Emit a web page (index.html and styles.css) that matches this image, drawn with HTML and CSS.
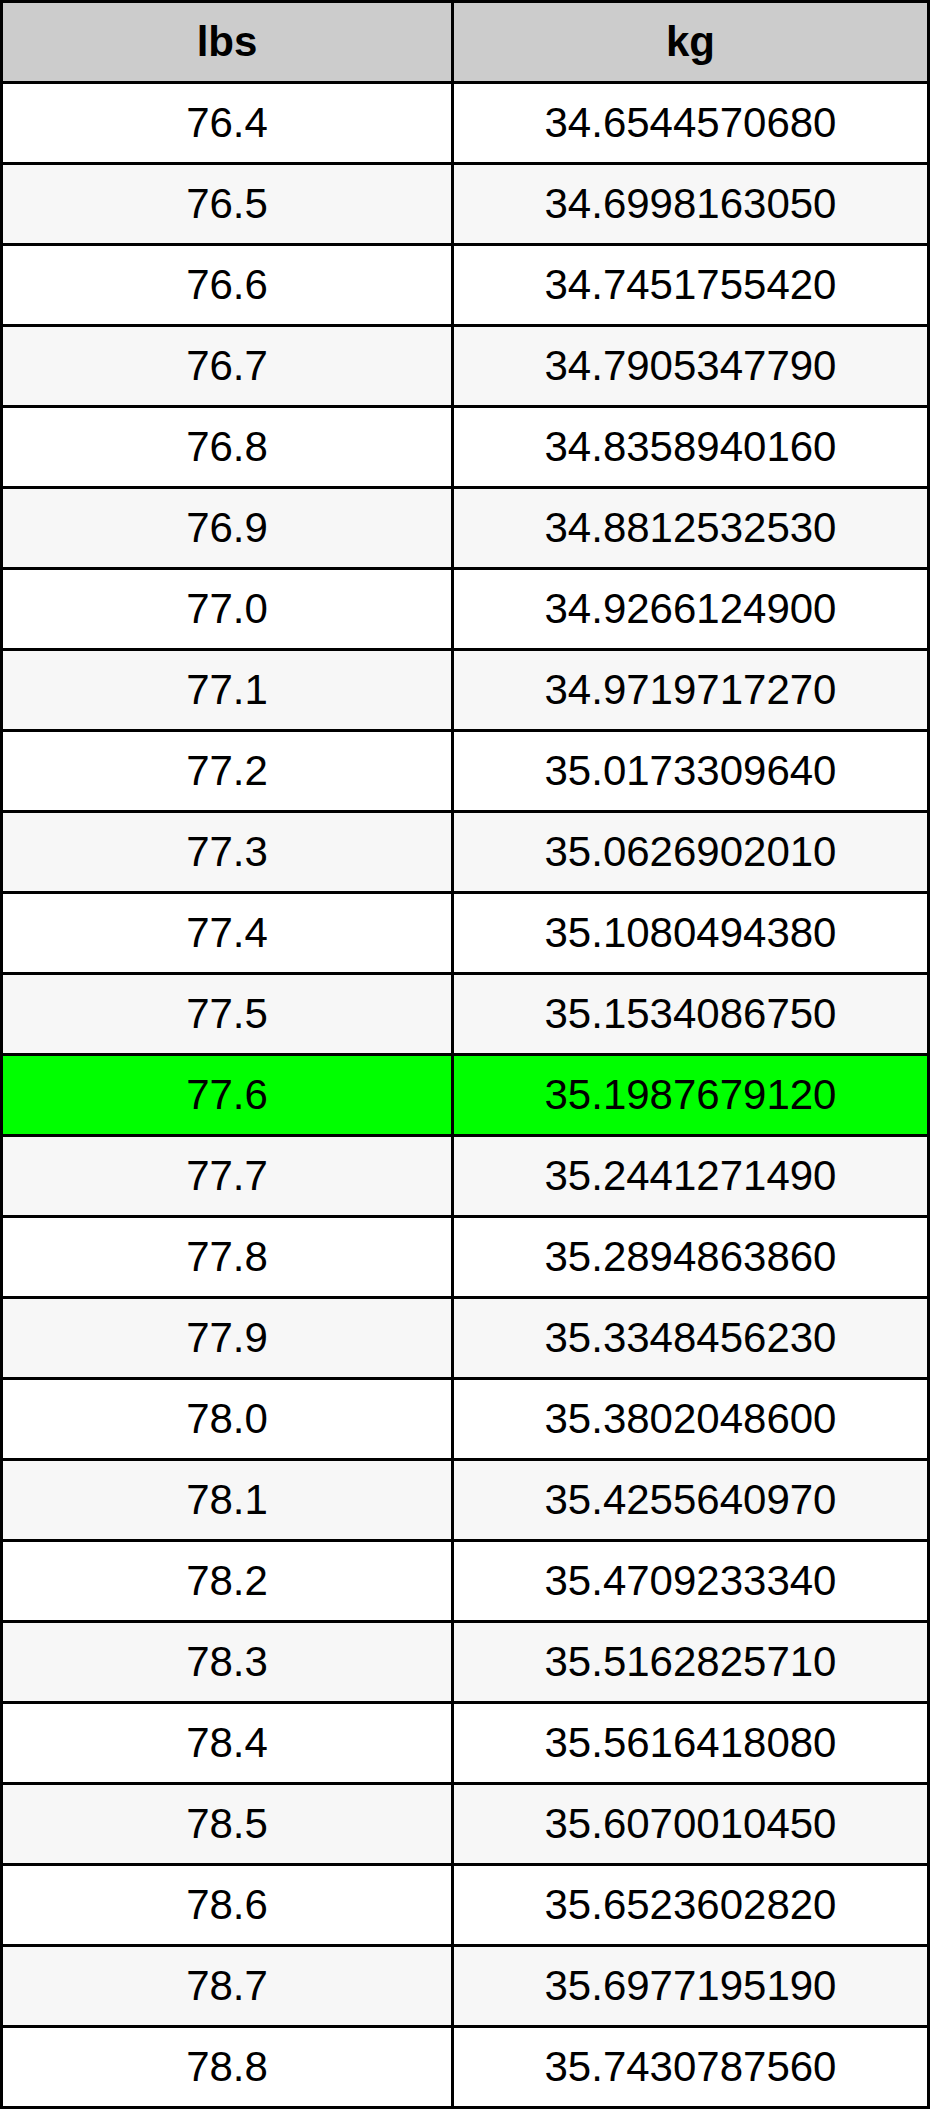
FILE: index.html
```html
<!DOCTYPE html>
<html>
<head>
<meta charset="utf-8">
<title>lbs to kg</title>
<link rel="stylesheet" href="styles.css">
</head>
<body>
<table class="conv">
<colgroup><col class="c1"><col class="c2"></colgroup>
<thead>
<tr><th>lbs</th><th>kg</th></tr>
</thead>
<tbody>
<tr><td>76.4</td><td>34.6544570680</td></tr>
<tr class="alt"><td>76.5</td><td>34.6998163050</td></tr>
<tr><td>76.6</td><td>34.7451755420</td></tr>
<tr class="alt"><td>76.7</td><td>34.7905347790</td></tr>
<tr><td>76.8</td><td>34.8358940160</td></tr>
<tr class="alt"><td>76.9</td><td>34.8812532530</td></tr>
<tr><td>77.0</td><td>34.9266124900</td></tr>
<tr class="alt"><td>77.1</td><td>34.9719717270</td></tr>
<tr><td>77.2</td><td>35.0173309640</td></tr>
<tr class="alt"><td>77.3</td><td>35.0626902010</td></tr>
<tr><td>77.4</td><td>35.1080494380</td></tr>
<tr class="alt"><td>77.5</td><td>35.1534086750</td></tr>
<tr class="hl"><td>77.6</td><td>35.1987679120</td></tr>
<tr class="alt"><td>77.7</td><td>35.2441271490</td></tr>
<tr><td>77.8</td><td>35.2894863860</td></tr>
<tr class="alt"><td>77.9</td><td>35.3348456230</td></tr>
<tr><td>78.0</td><td>35.3802048600</td></tr>
<tr class="alt"><td>78.1</td><td>35.4255640970</td></tr>
<tr><td>78.2</td><td>35.4709233340</td></tr>
<tr class="alt"><td>78.3</td><td>35.5162825710</td></tr>
<tr><td>78.4</td><td>35.5616418080</td></tr>
<tr class="alt"><td>78.5</td><td>35.6070010450</td></tr>
<tr><td>78.6</td><td>35.6523602820</td></tr>
<tr class="alt"><td>78.7</td><td>35.6977195190</td></tr>
<tr><td>78.8</td><td>35.7430787560</td></tr>
</tbody>
</table>
</body>
</html>
```
FILE: styles.css
```css
html, body {
  margin: 0;
  padding: 0;
  background: #ffffff;
}
.conv {
  width: 930px;
  table-layout: fixed;
  border-collapse: separate;
  border-spacing: 3px;
  background: #000000;
  font-family: "Liberation Sans", Arial, sans-serif;
  font-size: 42px;
  color: #000000;
}
.c1 { width: 448px; }
.c2 { width: 473px; }
.conv th, .conv td {
  height: 78px;
  padding: 0;
  text-align: center;
  vertical-align: middle;
  background: #ffffff;
  line-height: 1;
}
.conv th {
  background: #cccccc;
  font-weight: bold;
}
.conv tr.alt td { background: #f7f7f7; }
.conv tr.hl td { background: #00ff00; }
```
